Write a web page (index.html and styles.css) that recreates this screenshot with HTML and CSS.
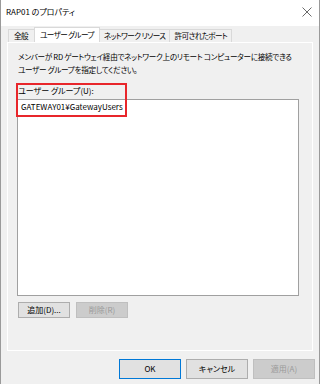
FILE: index.html
```html
<!DOCTYPE html>
<html lang="ja">
<head>
    <meta charset="UTF-8">
    <title>RAP01 のプロパティ</title>
    <link rel="stylesheet" href="styles.css">
</head>
<body>
    <div class="window">
        <div class="titlebar">
            <span class="title">RAP01 のプロパティ</span>
            <span class="close">
                <svg width="10" height="10" viewBox="0 0 10 10">
                    <path d="M0.5 0.5 L9.5 9.5 M9.5 0.5 L0.5 9.5" stroke="#444" stroke-width="0.8" fill="none"/>
                </svg>
            </span>
        </div>

        <div class="tabs">
            <div class="tab tab-first">全般</div>
            <div class="tab active">ユーザー グループ</div>
            <div class="tab">ネットワーク リソース</div>
            <div class="tab">許可されたポート</div>
        </div>

        <div class="panel">
            <p class="desc">メンバーが RD ゲートウェイ経由でネットワーク上のリモート コンピューターに接続できる<br>ユーザー グループを指定してください。</p>

            <div class="field-label">ユーザー グループ(U):</div>
            <div class="listbox">
                <div class="list-item">GATEWAY01¥GatewayUsers</div>
            </div>

            <div class="list-buttons">
                <button class="btn btn-small">追加(D)...</button>
                <button class="btn btn-small" disabled>削除(R)</button>
            </div>

            <div class="highlight"></div>
        </div>

        <div class="dialog-buttons">
            <button class="btn btn-wide btn-default">OK</button>
            <button class="btn btn-wide">キャンセル</button>
            <button class="btn btn-wide" disabled>適用(A)</button>
        </div>
    </div>
</body>
</html>
```

FILE: styles.css
```css
* {
    margin: 0;
    padding: 0;
    box-sizing: border-box;
}

body {
    font-family: 'Noto Sans CJK JP', 'Noto Sans', sans-serif;
    font-feature-settings: "palt";
    font-size: 8px;
    color: #000;
    background: #f0f0f0;
}

.window {
    width: 320px;
    height: 384px;
    background: #f0f0f0;
    border-left: 1px solid #9a9a9a;
    border-right: 1px solid #9a9a9a;
}

.titlebar {
    height: 26px;
    background: #fff;
    display: flex;
    align-items: center;
    justify-content: space-between;
    padding: 0 7px 2px 5px;
}

.title {
    font-size: 8px;
    line-height: 12px;
}

.close {
    display: flex;
}

.tabs {
    display: flex;
    align-items: flex-end;
    height: 16px;
    padding-left: 7px;
}

.tab {
    height: 13px;
    font-size: 7.6px;
    line-height: 12px;
    padding: 0 4px;
    border: 1px solid #d9d9d9;
    border-bottom: none;
    border-left: none;
    background: #f0f0f0;
    white-space: pre;
    letter-spacing: -0.6px;
}

.tab-first {
    border-left: 1px solid #d9d9d9;
    padding: 0 6px 0 5px;
}

.tab.active {
    height: 16px;
    line-height: 14px;
    background: #fff;
    border-left: 1px solid #d9d9d9;
    margin-left: -1px;
    margin-bottom: -1px;
    padding: 0 5px;
    position: relative;
}

.panel {
    position: relative;
    margin: 0 6px;
    height: 309px;
    border: 1px solid #fff;
    background: #f0f0f0;
    padding: 7px 0 0 10px;
}

.desc {
    font-size: 7.6px;
    line-height: 13px;
    white-space: nowrap;
    letter-spacing: -0.3px;
}

.field-label {
    margin-top: 9px;
    line-height: 12px;
}

.listbox {
    margin-top: 2px;
    margin-left: -1px;
    width: 282px;
    height: 197px;
    background: #fff;
    border: 1px solid #a0a0a0;
    padding: 1px 3px;
}

.list-item {
    line-height: 12px;
}

.list-buttons {
    display: flex;
    gap: 6px;
    margin-top: 6px;
}

.btn {
    font-family: inherit;
    font-feature-settings: "palt";
    font-size: 8px;
    color: #000;
    background: #e1e1e1;
    border: 1px solid #adadad;
    height: 16px;
    line-height: 12px;
}

.btn:disabled {
    background: #cccccc;
    border-color: #bfbfbf;
    color: #9a9a9a;
}

.btn-small {
    width: 52px;
}

.btn-wide {
    width: 62px;
    height: 20px;
}

.btn-default {
    border: 1px solid #0078d7;
}

.dialog-buttons {
    display: flex;
    justify-content: flex-end;
    gap: 5px;
    padding: 8px 4px 0 0;
}

.highlight {
    position: absolute;
    left: 8px;
    top: 40px;
    width: 111px;
    height: 34px;
    border: 2px solid #e8262b;
}
```
